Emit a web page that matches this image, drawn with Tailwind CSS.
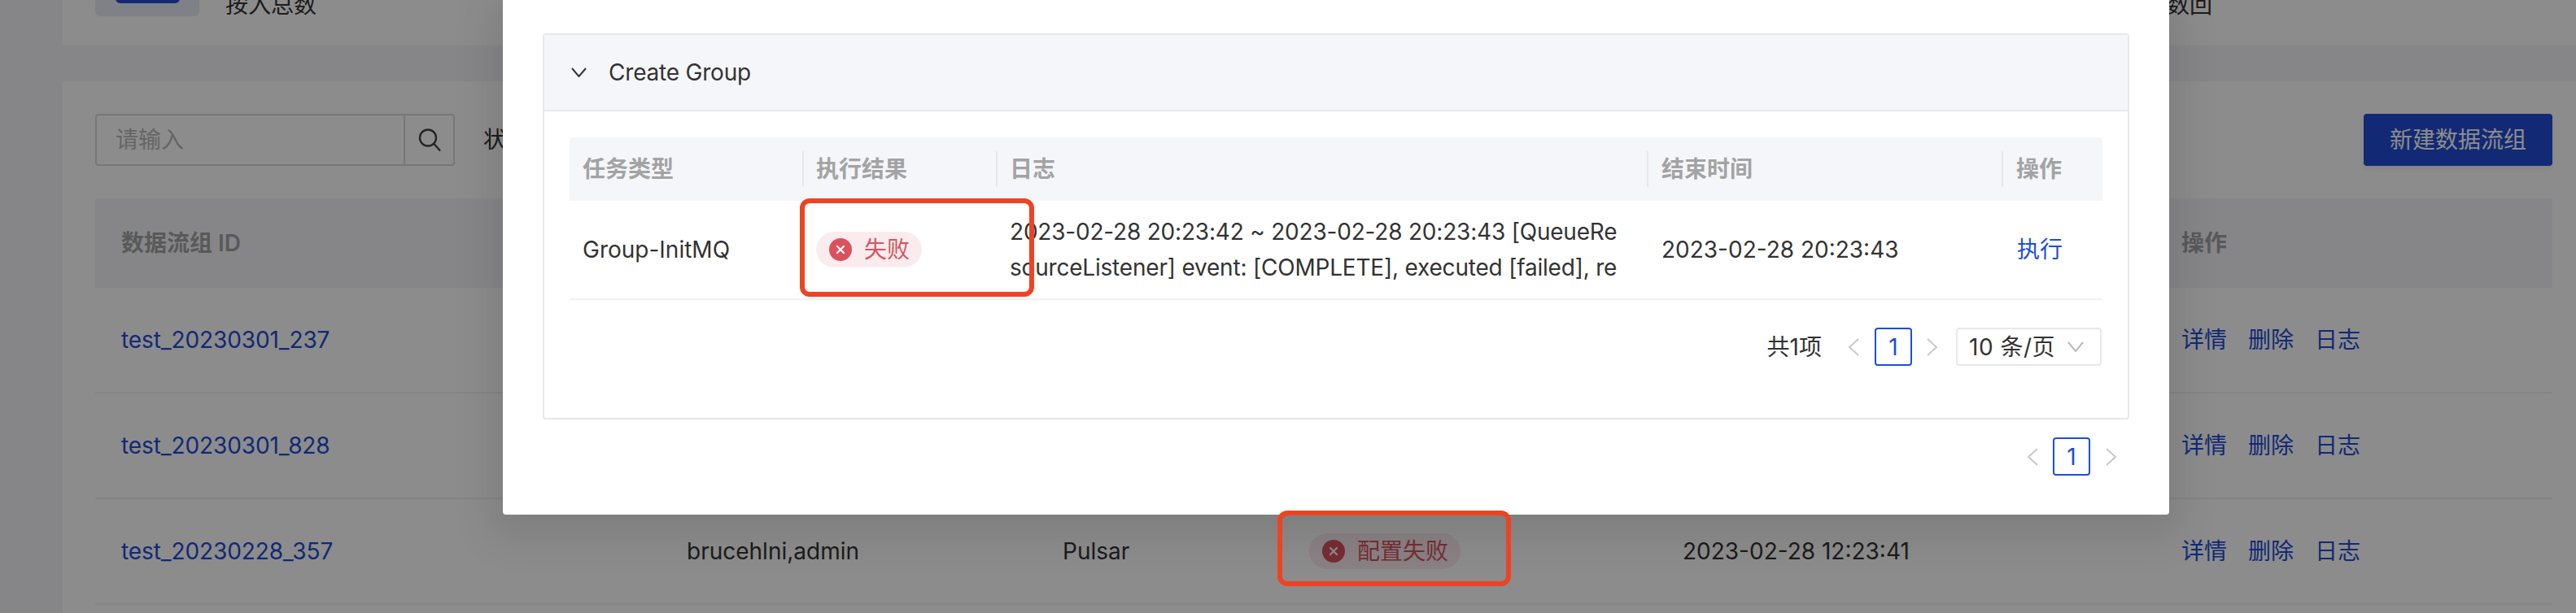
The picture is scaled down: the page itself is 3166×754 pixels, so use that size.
<!doctype html>
<html lang="zh-CN">
<head>
<meta charset="utf-8">
<script src="https://cdn.jsdelivr.net/npm/@tailwindcss/browser@4"></script>
</head>
<body>
<div class="relative h-[754px] w-[3166px] overflow-hidden bg-[#f4f5f9] font-['Inter','Noto_Sans_CJK_SC',sans-serif] text-[28px] leading-[44px] text-[#333]">
  <!-- page behind the modal -->
  <div class="ml-[77px] flex h-[56px] items-end overflow-hidden bg-white pb-[36px] pl-[40px]">
    <div class="flex h-[100px] w-[128px] shrink-0 justify-center rounded-[6px] bg-[#e8ecf5]">
      <div class="h-[84px] w-[79px] rounded-[6px] bg-[#214cd5]"></div>
    </div>
    <div class="ml-[32px] mb-[-8px] shrink-0">按入总数</div>
    <div class="ml-[2274px] mb-[-8px] shrink-0">数回</div>
  </div>
  <div class="ml-[77px] mt-[44px] h-[654px] bg-white pl-[40px] pr-[29px] pt-[40px]">
    <div class="flex h-[64px] items-center justify-between">
      <div class="flex items-center">
        <div class="flex h-[64px] w-[442px] rounded-[4px] border-2 border-[#d9d9d9]">
          <div class="flex flex-1 items-center pl-[23px] text-[#b9b9b9]">请输入</div>
          <div class="flex w-[61px] items-center justify-center border-l-2 border-[#d9d9d9]">
            <svg width="30" height="30" viewBox="0 0 30 30" fill="none" stroke="#444" stroke-width="2.4"><circle cx="13" cy="12.5" r="10"/><path d="M20.5 20 L28 28.5"/></svg>
          </div>
        </div>
        <div class="ml-[35px]">状态</div>
      </div>
      <div class="flex h-[64px] w-[232px] items-center justify-center rounded-[4px] bg-[#214cd5] text-white shadow-[0_4px_6px_rgba(0,0,0,0.06)]">新建数据流组</div>
    </div>
    <div class="mt-[40px] grid grid-cols-[695px_462px_303px_459px_613px_488px]">
      <div class="col-span-5 flex h-[110px] items-center bg-[#f4f5f9] pl-[32px] font-semibold text-[#a3a3a3]">数据流组 ID</div>
      <div class="flex h-[110px] items-center bg-[#f4f5f9] pl-[32px] font-semibold text-[#a3a3a3]">操作</div>

      <div class="col-span-5 flex h-[130px] items-center border-b-2 border-[#f0f0f0] pl-[32px] text-[#214cd5] tracking-[-0.1px]">test_20230301_237</div>
      <div class="flex h-[130px] items-center gap-[26px] border-b-2 border-[#f0f0f0] pl-[32px] text-[#214cd5]"><span>详情</span><span>删除</span><span>日志</span></div>

      <div class="col-span-5 flex h-[130px] items-center border-b-2 border-[#f0f0f0] pl-[32px] text-[#214cd5] tracking-[-0.1px]">test_20230301_828</div>
      <div class="flex h-[130px] items-center gap-[26px] border-b-2 border-[#f0f0f0] pl-[32px] text-[#214cd5]"><span>详情</span><span>删除</span><span>日志</span></div>

      <div class="flex h-[130px] items-center border-b-2 border-[#f0f0f0] pl-[32px] text-[#214cd5] tracking-[-0.1px]">test_20230228_357</div>
      <div class="flex h-[130px] items-center border-b-2 border-[#f0f0f0] pl-[32px]">brucehlni,admin</div>
      <div class="flex h-[130px] items-center border-b-2 border-[#f0f0f0] pl-[32px]">Pulsar</div>
      <div class="flex h-[130px] items-center border-b-2 border-[#f0f0f0] pl-[32px]">
        <div class="flex h-[44px] w-[186px] items-center rounded-full bg-[#faecee] pl-[16px] text-[#d8535e]">
          <svg class="shrink-0" width="28" height="28" viewBox="0 0 28 28"><circle cx="14" cy="14" r="14" fill="#d8535e"/><path d="M10 10 L18 18 M18 10 L10 18" stroke="#fff" stroke-width="2.2" stroke-linecap="round"/></svg>
          <span class="ml-[15px]">配置失败</span>
        </div>
      </div>
      <div class="flex h-[130px] items-center border-b-2 border-[#f0f0f0] pl-[32px]">2023-02-28 12:23:41</div>
      <div class="flex h-[130px] items-center gap-[26px] border-b-2 border-[#f0f0f0] pl-[32px] text-[#214cd5]"><span>详情</span><span>删除</span><span>日志</span></div>
    </div>
  </div>

  <!-- backdrop -->
  <div class="absolute inset-0 bg-black/45"></div>

  <!-- modal -->
  <div class="absolute left-[618px] top-0 h-[633px] w-[2048px] rounded-b-[4px] bg-white px-[49px] pt-[41px] shadow-[0_14px_50px_14px_rgba(0,0,0,0.1)]">
    <div class="h-[475px] rounded-[4px] border-2 border-[#e8e8ea]">
      <div class="flex h-[94px] items-center border-b-2 border-[#e8e8ea] bg-[#f5f6fa] pl-[33px]">
        <svg width="19" height="12" viewBox="0 0 19 12" fill="none" stroke="#333" stroke-width="2"><path d="M1 1 L9.5 11 L18 1"/></svg>
        <span class="ml-[27px] tracking-[-0.2px]">Create Group</span>
      </div>
      <div class="px-[31px] pt-[32px]">
        <div class="grid grid-cols-[286px_238px_800px_436px_124px]">
          <div class="flex h-[78px] items-center rounded-tl-[4px] bg-[#f5f6fa] pl-[16px] font-semibold text-[#a3a3a3]">任务类型</div>
          <div class="flex h-[78px] items-center bg-[#f5f6fa] font-semibold text-[#a3a3a3]"><div class="flex h-[44px] items-center border-l-2 border-[#e8e8ec] pl-[15px]">执行结果</div></div>
          <div class="flex h-[78px] items-center bg-[#f5f6fa] font-semibold text-[#a3a3a3]"><div class="flex h-[44px] items-center border-l-2 border-[#e8e8ec] pl-[15px]">日志</div></div>
          <div class="flex h-[78px] items-center bg-[#f5f6fa] font-semibold text-[#a3a3a3]"><div class="flex h-[44px] items-center border-l-2 border-[#e8e8ec] pl-[16px]">结束时间</div></div>
          <div class="flex h-[78px] items-center rounded-tr-[4px] bg-[#f5f6fa] font-semibold text-[#a3a3a3]"><div class="flex h-[44px] items-center border-l-2 border-[#e8e8ec] pl-[16px]">操作</div></div>

          <div class="flex h-[122px] items-center border-b-2 border-[#f0f0f0] pl-[16px]">Group-InitMQ</div>
          <div class="flex h-[122px] items-center border-b-2 border-[#f0f0f0] pl-[17px]">
            <div class="flex h-[44px] w-[130px] items-center rounded-full bg-[#faecee] pl-[16px] text-[#d8535e]">
              <svg class="shrink-0" width="28" height="28" viewBox="0 0 28 28"><circle cx="14" cy="14" r="14" fill="#d8535e"/><path d="M10 10 L18 18 M18 10 L10 18" stroke="#fff" stroke-width="2.2" stroke-linecap="round"/></svg>
              <span class="ml-[15px]">失败</span>
            </div>
          </div>
          <div class="flex h-[122px] flex-col justify-center border-b-2 border-[#f0f0f0] pl-[17px] whitespace-nowrap tracking-[-0.2px]">
            <div>2023-02-28 20:23:42 ~ 2023-02-28 20:23:43 [QueueRe</div>
            <div>sourceListener] event: [COMPLETE], executed [failed], re</div>
          </div>
          <div class="flex h-[122px] items-center border-b-2 border-[#f0f0f0] pl-[18px]">2023-02-28 20:23:43</div>
          <div class="flex h-[122px] items-center border-b-2 border-[#f0f0f0] pl-[19px] text-[#1d4fd8]">执行</div>
        </div>
        <div class="mt-[34px] flex h-[47px] items-center justify-end pr-px">
          <span>共1项</span>
          <svg class="ml-[31px]" width="16" height="22" viewBox="0 0 16 22" fill="none" stroke="#c8c8c8" stroke-width="2"><path d="M14 1 L3 11 L14 21"/></svg>
          <div class="ml-[18px] flex h-[47px] w-[46px] items-center justify-center rounded-[4px] border-2 border-[#1d4fd8] text-[#1d4fd8]">1</div>
          <svg class="ml-[17px]" width="16" height="22" viewBox="0 0 16 22" fill="none" stroke="#c8c8c8" stroke-width="2"><path d="M2 1 L13 11 L2 21"/></svg>
          <div class="ml-[21px] flex h-[47px] w-[179px] items-center rounded-[4px] border-2 border-[#e8e8ea] pl-[14px]">
            <span class="tracking-[0.5px]">10 条/页</span>
            <svg class="ml-[15px]" width="20" height="13" viewBox="0 0 20 13" fill="none" stroke="#bbb" stroke-width="2"><path d="M1 1 L10 12 L19 1"/></svg>
          </div>
        </div>
      </div>
    </div>
    <div class="mt-[22px] flex h-[47px] items-center justify-end pr-[14px]">
      <svg width="16" height="22" viewBox="0 0 16 22" fill="none" stroke="#c8c8c8" stroke-width="2"><path d="M14 1 L3 11 L14 21"/></svg>
      <div class="ml-[17px] flex h-[47px] w-[46px] items-center justify-center rounded-[4px] border-2 border-[#1d4fd8] text-[#1d4fd8]">1</div>
      <svg class="ml-[18px]" width="16" height="22" viewBox="0 0 16 22" fill="none" stroke="#c8c8c8" stroke-width="2"><path d="M2 1 L13 11 L2 21"/></svg>
    </div>
  </div>

  <!-- annotation rectangles -->
  <div class="absolute left-[983px] top-[244px] h-[121px] w-[288px] rounded-[12px] border-[6px] border-[#ee4323]"></div>
  <div class="absolute left-[1570px] top-[628px] h-[93px] w-[287px] rounded-[12px] border-[6px] border-[#ee4323]"></div>
</div>
</body>
</html>
